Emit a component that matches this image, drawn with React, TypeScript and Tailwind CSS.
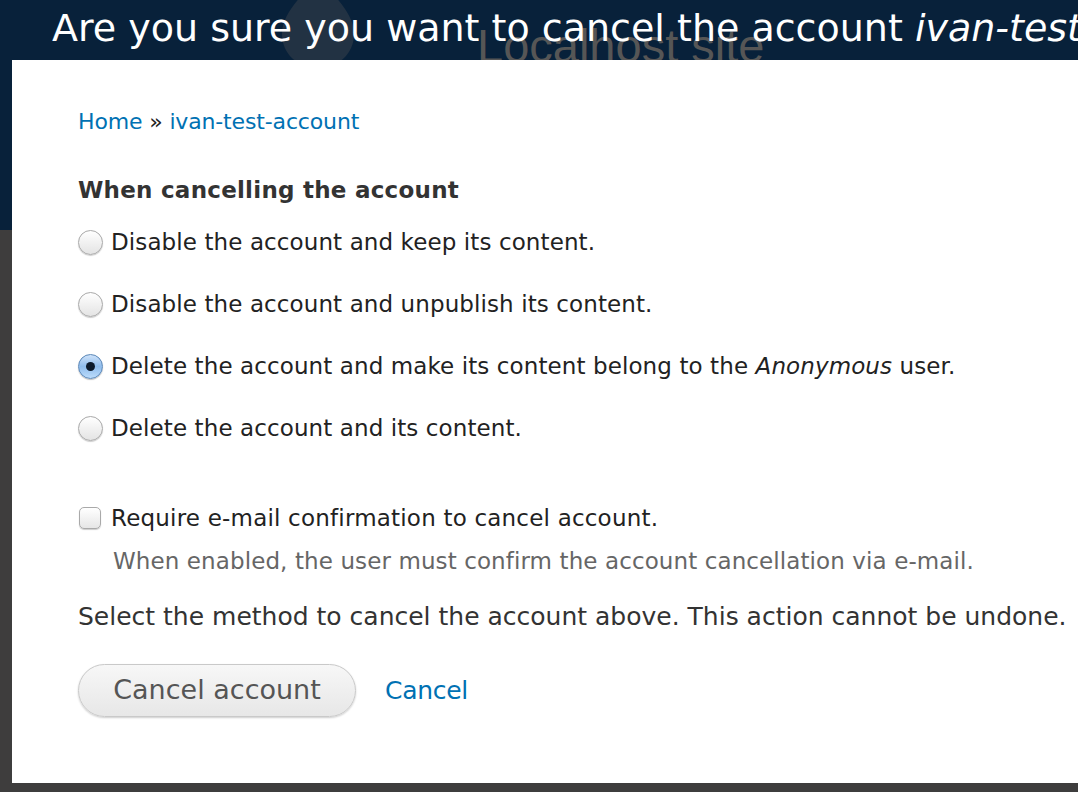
import React from "react";

const font = { fontFamily: '"DejaVu Sans", "Liberation Sans", sans-serif' };

function Radio({ checked }: { checked?: boolean }) {
  if (checked) {
    return (
      <span className="flex h-[25px] w-[25px] shrink-0 items-center justify-center rounded-full border border-[#5a87b8] bg-gradient-to-b from-[#cfe3fa] via-[#8fbcec] to-[#bcdcfb] shadow-[0_1px_1px_rgba(0,0,0,0.25)]">
        <span className="h-[9px] w-[9px] rounded-full bg-[#0d1a2b]" />
      </span>
    );
  }
  return (
    <span className="h-[25px] w-[25px] shrink-0 rounded-full border border-[#a9a9a9] bg-gradient-to-b from-[#ffffff] via-[#f1f1f1] to-[#e4e4e4] shadow-[0_1px_1px_rgba(0,0,0,0.2)]" />
  );
}

function RadioRow({ checked, children }: { checked?: boolean; children: React.ReactNode }) {
  return (
    <div className="flex h-[62px] items-center gap-[8px]">
      <Radio checked={checked} />
      <span className="whitespace-nowrap text-[23px] tracking-[0.1px] text-[#222]">{children}</span>
    </div>
  );
}

export default function App() {
  return (
    <div className="relative h-[792px] w-[1078px] overflow-hidden bg-[#3e3d3d]" style={font}>
      {/* page header behind modal */}
      <div className="flex h-[230px] items-start overflow-hidden bg-[#08213a] pl-[280px]">
        <svg width="76" height="96" viewBox="0 0 76 96" className="mt-[-28px] shrink-0">
          <path d="M38 0 C44 18 74 36 74 62 C74 82 58 96 38 96 C18 96 2 82 2 62 C2 36 32 18 38 0 Z" fill="#223243" />
        </svg>
        <span className="ml-[121px] mt-[22px] whitespace-nowrap text-[47px] leading-none text-[#565656]" style={{ fontFamily: '"Liberation Sans", Arial, sans-serif' }}>
          Localhost site
        </span>
      </div>

      {/* modal title */}
      <div className="absolute left-[52px] top-[2px] whitespace-nowrap text-[38px] leading-[52px] text-white">
        Are you sure you want to cancel the account <em>ivan-test-account</em>?
      </div>

      {/* modal body */}
      <div className="absolute left-[12px] top-[60px] h-[723px] w-[1080px] bg-white pl-[66px] pt-[46px] text-[#333]">
        <div className="text-[22px] leading-[32px] tracking-[-0.15px]">
          <span className="text-[#0071b3]">Home</span>
          <span className="text-[#222]"> » </span>
          <span className="text-[#0071b3]">ivan-test-account</span>
        </div>
        <div className="mt-[38px] text-[23px] font-bold leading-[28px] tracking-[0.25px] text-[#333]">When cancelling the account</div>
        <div className="mt-[7px] flex flex-col">
          <RadioRow>Disable the account and keep its content.</RadioRow>
          <RadioRow>Disable the account and unpublish its content.</RadioRow>
          <RadioRow checked>
            Delete the account and make its content belong to the <em>Anonymous</em> user.
          </RadioRow>
          <RadioRow>Delete the account and its content.</RadioRow>
        </div>
        <div className="mt-[42px] flex h-[34px] items-center gap-[10px]">
          <span className="ml-[1px] h-[22px] w-[22px] rounded-[5px] border border-[#a9a9a9] bg-gradient-to-b from-[#ffffff] to-[#e6e6e6] shadow-[0_1px_1px_rgba(0,0,0,0.2)]" />
          <span className="whitespace-nowrap text-[23px] tracking-[0.2px] text-[#222]">Require e-mail confirmation to cancel account.</span>
        </div>
        <div className="ml-[35px] mt-[11px] whitespace-nowrap text-[23px] leading-[30px] tracking-[0.1px] text-[#666]">
          When enabled, the user must confirm the account cancellation via e-mail.
        </div>
        <div className="mt-[26px] whitespace-nowrap text-[25px] leading-[30px] text-[#333]">
          Select the method to cancel the account above. This action cannot be undone.
        </div>
        <div className="mt-[32px] flex items-center">
          <button className="flex h-[53px] w-[278px] items-center justify-center rounded-full border border-[#c9c9c9] bg-gradient-to-b from-[#f7f7f7] to-[#e7e7e7] text-[27px] text-[#555] shadow-[0_1px_2px_rgba(0,0,0,0.2)]" style={font}>
            Cancel account
          </button>
          <span className="ml-[29px] text-[25px] tracking-[-0.3px] text-[#0071b3]">Cancel</span>
        </div>
      </div>
    </div>
  );
}
